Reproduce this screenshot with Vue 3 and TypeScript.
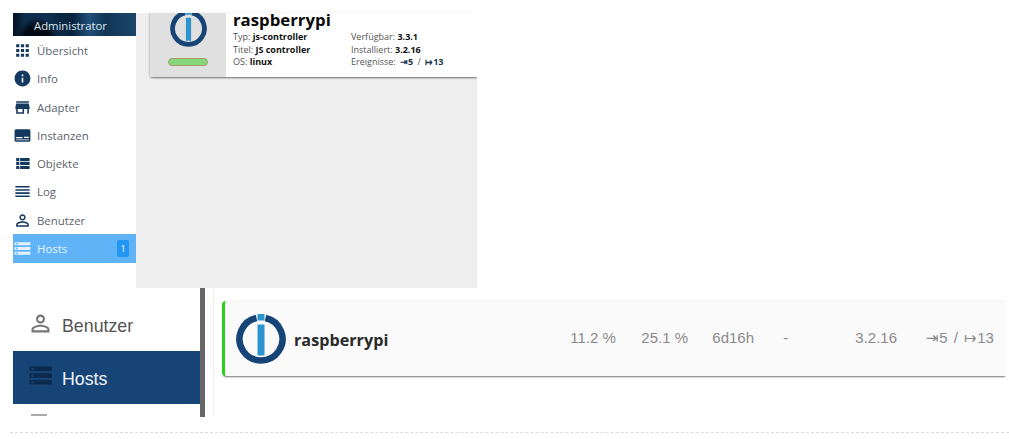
<script setup lang="ts">
interface Item { label: string; d: string }
const menu: Item[] = [
  { label: 'Übersicht', d: 'M4 8h4V4H4v4zm6 12h4v-4h-4v4zm-6 0h4v-4H4v4zm0-6h4v-4H4v4zm6 0h4v-4h-4v4zm6-10v4h4V4h-4zm-6 4h4V4h-4v4zm6 6h4v-4h-4v4zm0 6h4v-4h-4v4z' },
  { label: 'Info', d: 'M12 2C6.48 2 2 6.48 2 12s4.48 10 10 10 10-4.48 10-10S17.52 2 12 2zm1 15h-2v-6h2v6zm0-8h-2V7h2v2z' },
  { label: 'Adapter', d: 'M20 4H4v2h16V4zm1 10v-2l-1-5H4l-1 5v2h1v6h10v-6h4v6h2v-6h1zm-9 4H6v-4h6v4z' },
  { label: 'Instanzen', d: 'M20 4H4c-1.1 0-2 .9-2 2v12c0 1.1.9 2 2 2h16c1.1 0 2-.9 2-2V6c0-1.1-.9-2-2-2zM4 14h8v1.5H4V14zm16 4H4v-1h16v1zm0-3h-6v-1.5h6V15z' },
  { label: 'Objekte', d: 'M4 14h4v-4H4v4zm0 5h4v-4H4v4zM4 9h4V5H4v4zm5 5h12v-4H9v4zm0 5h12v-4H9v4zM9 5v4h12V5H9z' },
  { label: 'Log', d: 'M3 15h18v-2H3v2zm0 4h18v-2H3v2zm0-8h18V9H3v2zm0-6v2h18V5H3z' },
  { label: 'Benutzer', d: 'M12 5.9c1.16 0 2.1.94 2.1 2.1s-.94 2.1-2.1 2.1S9.9 9.16 9.9 8s.94-2.1 2.1-2.1m0 9c2.97 0 6.1 1.46 6.1 2.1v1.1H5.9V17c0-.64 3.13-2.1 6.1-2.1M12 4C9.79 4 8 5.79 8 8s1.79 4 4 4 4-1.79 4-4-1.79-4-4-4zm0 9c-2.67 0-8 1.34-8 4v3h16v-3c0-2.66-5.33-4-8-4z' }
]
const storage = 'M2 20h20v-4H2v4zm2-3h2v2H4v-2zM2 4v4h20V4H2zm4 3H4V5h2v2zm-4 7h20v-4H2v4zm2-3h2v2H4v-2z'
const person = menu[6].d
const stats = [
  { text: '11.2 %', w: 71 },
  { text: '25.1 %', w: 71 },
  { text: '6d16h', w: 71 },
  { text: '-', w: 72 },
  { text: '3.2.16', w: 71 },
  { text: '⇥5 / ↦13', w: 72 }
]
</script>

<template>
  <div class="page">
    <section class="shot-top">
      <aside class="side">
        <div class="side-head">Administrator</div>
        <ul class="menu">
          <li v-for="m in menu" :key="m.label" class="menu-item">
            <svg class="menu-icon" viewBox="0 0 24 24"><path :d="m.d" /></svg>
            <span>{{ m.label }}</span>
          </li>
          <li class="menu-item active">
            <svg class="menu-icon" viewBox="0 0 24 24"><path :d="storage" /></svg>
            <span>Hosts</span>
            <b class="badge">1</b>
          </li>
        </ul>
      </aside>
      <div class="pane">
        <article class="host-card">
          <div class="card-left">
            <svg class="logo-small" viewBox="0 0 100 100">
              <path d="M59 7.9A43 43 0 1 1 41 7.9" fill="none" stroke="#164477" stroke-width="13" />
              <path d="M43 0h14v13H43zM43 21h14v62H43z" fill="#2e94d0" />
            </svg>
            <div class="status"></div>
          </div>
          <div class="card-body">
            <h2>raspberrypi</h2>
            <div class="info">
              <div>
                <p>Typ: <b>js-controller</b></p>
                <p>Titel: <b>JS controller</b></p>
                <p>OS: <b>linux</b></p>
              </div>
              <div>
                <p>Verfügbar: <b>3.3.1</b></p>
                <p>Installiert: <b>3.2.16</b></p>
                <p class="events">Ereignisse: <b class="arrows">⇥5</b> / <b class="arrows">↦13</b></p>
              </div>
            </div>
          </div>
        </article>
      </div>
    </section>

    <section class="shot-bottom">
      <aside class="side-big">
        <div class="big-item">
          <svg class="big-icon grey" viewBox="0 0 24 24"><path :d="person" /></svg>
          <span>Benutzer</span>
        </div>
        <div class="big-item selected">
          <svg class="big-icon navy" viewBox="0 0 24 24"><path :d="storage" /></svg>
          <span>Hosts</span>
        </div>
        <div class="big-peek"></div>
      </aside>
      <div class="rule"></div>
      <div class="main">
        <article class="row-card">
          <svg class="logo-big" viewBox="0 0 100 100">
            <path d="M59 7.9A43 43 0 1 1 41 7.9" fill="none" stroke="#164477" stroke-width="13" />
            <path d="M43 0h14v13H43zM43 21h14v62H43z" fill="#2e94d0" />
          </svg>
          <strong class="row-name">raspberrypi</strong>
          <div class="row-stats">
            <span v-for="s in stats" :key="s.text" :style="{ width: s.w + 'px' }">{{ s.text }}</span>
          </div>
        </article>
      </div>
    </section>
    <div class="dash"></div>
  </div>
</template>

<style>
html, body { margin: 0; background: #fff; }
</style>

<style scoped>
.page {
  width: 1009px;
  height: 439px;
  overflow: hidden;
  position: relative;
  background: #fff;
  padding-top: 13px;
  box-sizing: border-box;
}
.shot-top {
  display: flex;
  margin-left: 13px;
  height: 275px;
  width: 464px;
  font-family: "Open Sans", "Liberation Sans", sans-serif;
}
.side { width: 123px; flex: none; }
.side-head {
  height: 23px;
  line-height: 26px;
  box-sizing: border-box;
  padding-left: 21px;
  font-size: 11.3px;
  color: #dfe7ee;
  background:
    radial-gradient(ellipse 22px 30px at 24px 34px, #020a14 0 70%, rgba(2, 10, 20, 0) 100%),
    linear-gradient(90deg, #04101e 0, #0c2f4e 10%, #0d3050 25%, #07223c 48%, #1f4f78 62%, #0f3555 75%, #1c4669 100%);
}
.menu { list-style: none; margin: 0; padding: 0.3px 0 0; }
.menu-item {
  height: 28.3px;
  display: flex;
  align-items: center;
  font-size: 11.4px;
  color: #5a636d;
}
.menu-icon {
  width: 19px;
  height: 19px;
  margin-right: 5px;
  fill: #14395f;
  flex: none;
}
.active {
  background: #61b3f8;
  color: #e8f4ff;
}
.active .menu-icon { fill: #e4f2ff; }
.badge {
  margin-left: auto;
  margin-right: 7px;
  width: 12px;
  height: 17px;
  line-height: 17px;
  text-align: center;
  font-size: 9px;
  font-weight: 400;
  color: #fff;
  background: #2196f3;
  border-radius: 2px;
}
.pane {
  flex: 1;
  background: #eeeeee;
  padding-left: 14px;
}
.host-card {
  display: flex;
  height: 64px;
  background: #fff;
  border-radius: 0 0 0 3px;
  box-shadow: 0 1px 2px rgba(0, 0, 0, .55);
  clip-path: inset(-1px 0 -4px -4px);
}
.card-left {
  width: 76px;
  flex: none;
  background: #e0e0e0;
  display: flex;
  flex-direction: column;
  align-items: center;
  overflow: hidden;
}
.logo-small {
  width: 37px;
  height: 37px;
  margin-top: -3px;
  flex: none;
}
.status {
  width: 38px;
  height: 6px;
  margin-top: 11px;
  background: #86d67c;
  border: 1px solid #a59a62;
  border-radius: 4px;
}
.card-body { padding-left: 7px; flex: 1; color: #111; }
.card-body h2 {
  margin: -1px 0 0;
  height: 19px;
  line-height: 15px;
  font-size: 16.8px;
  font-weight: 700;
  color: #0a0a0a;
}
.info {
  display: grid;
  grid-template-columns: 118px 1fr;
}
.info p {
  margin: 0;
  height: 12.7px;
  line-height: 12.7px;
  font-size: 9px;
  color: #555;
  white-space: nowrap;
}
.info .events { word-spacing: 2px; }
.info b { color: #111; font-weight: 700; }
.info .arrows { color: #1c3550; }
.shot-bottom {
  display: flex;
  height: 129px;
  margin-left: 13px;
  overflow: hidden;
  font-family: "Liberation Sans", Arial, sans-serif;
}
.side-big { width: 187px; flex: none; padding-top: 9px; box-sizing: border-box; overflow: hidden; }
.big-item {
  height: 54px;
  display: flex;
  align-items: center;
  font-size: 17.8px;
  color: #555;
}
.big-item span { margin-left: 8.5px; padding-top: 4px; }
.big-icon { width: 27px; height: 27px; margin-left: 13.5px; flex: none; }
.grey { fill: #777; margin-bottom: 2px; }
.navy { fill: #0c2a4d; margin-bottom: 4px; }
.selected {
  height: 53px;
  background: #164477;
  color: #f0f5fb;
}
.big-peek {
  width: 16px;
  height: 2px;
  margin: 10px 0 0 18px;
  background: #aaa;
}
.rule { width: 5px; flex: none; background: #666; }
.main {
  flex: 1;
  margin-left: 8px;
  padding: 13px 3px 0 8px;
  border-left: 1px solid #f2f2f2;
  min-width: 0;
}
.row-card {
  height: 75px;
  display: flex;
  align-items: center;
  box-sizing: border-box;
  background: #fafafa;
  border-left: 3px solid #2ccf1e;
  border-radius: 4px 0 0 4px;
  box-shadow: 0 2px 2px -1px rgba(0, 0, 0, .55), 0 -1px 1px rgba(0, 0, 0, .04);
  clip-path: inset(-3px 0 -4px -4px);
}
.logo-big { width: 50px; height: 50px; margin-left: 11px; flex: none; }
.row-name {
  margin-left: 8px;
  margin-top: 2px;
  font-family: "Open Sans", sans-serif;
  font-size: 16.2px;
  font-weight: 700;
  color: #2a2a2a;
}
.row-stats {
  margin-left: 182px;
  margin-bottom: 2px;
  display: flex;
  font-size: 15px;
  color: #8a8a8a;
  white-space: nowrap;
}
.row-stats span:last-child { word-spacing: 2px; }
.dash {
  margin: 15px 0 0 10px;
  border-top: 1px dashed #dcdcdc;
}
</style>
